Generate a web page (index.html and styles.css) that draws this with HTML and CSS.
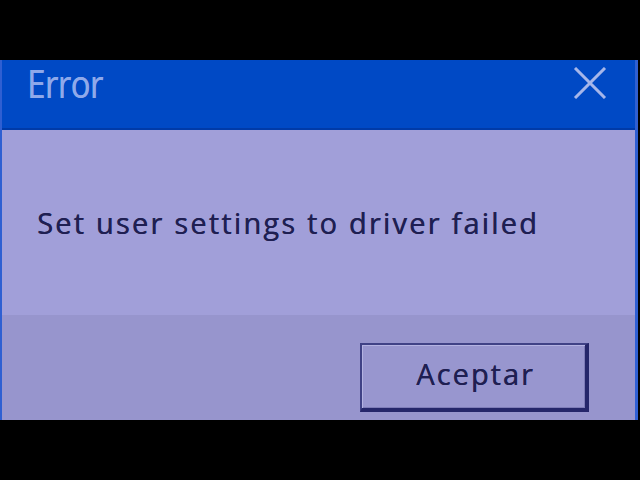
FILE: index.html
```html
<!DOCTYPE html>
<html>
<head>
<meta charset="utf-8">
<link rel="stylesheet" href="styles.css">
</head>
<body>
<div class="screen">
  <div class="dialog">
    <div class="titlebar">
      <span class="title">Error</span>
      <svg class="close" width="34" height="32" viewBox="0 0 34 32">
        <path d="M2 1 L32 31 M32 1 L2 31" stroke="#a6b6ea" stroke-width="3" fill="none"/>
      </svg>
    </div>
    <div class="content">
      <p class="message">Set user settings to driver failed</p>
    </div>
    <div class="footer">
      <button class="btn">Aceptar</button>
    </div>
  </div>
</div>
</body>
</html>
```
FILE: styles.css
```css
html, body {
  margin: 0;
  padding: 0;
  background: #000;
}
.screen {
  width: 640px;
  height: 480px;
  padding: 60px 0 60px 0;
  box-sizing: border-box;
  display: flex;
}
.dialog {
  flex: 1;
  display: flex;
  flex-direction: column;
  border-left: 2px solid #2f5fd2;
  border-right: 3px solid #2f5fd2;
  margin-right: 2px;
  font-family: "Open Sans", "Noto Sans", sans-serif;
}
.titlebar {
  height: 70px;
  box-sizing: border-box;
  background: #0049c5;
  border-bottom: 2px solid #003aa8;
  display: flex;
  align-items: flex-start;
  justify-content: space-between;
  padding: 0 28px 0 25px;
}
.title {
  display: inline-block;
  color: #8fa9ea;
  font-size: 38px;
  line-height: 38px;
  margin-top: 4px;
  letter-spacing: -0.5px;
  transform: scaleX(0.86);
  transform-origin: left center;
  text-shadow: 0.5px 0 0 #8fa9ea;
}
.close {
  display: block;
  margin-top: 7px;
}
.content {
  height: 185px;
  background: #a19fd9;
  padding-left: 35px;
  box-sizing: border-box;
}
.message {
  margin: 0;
  padding-top: 74px;
  font-size: 29px;
  line-height: 38px;
  color: #1f1f52;
  letter-spacing: 2.2px;
  text-shadow: 0.4px 0 0 #1f1f52;
}
.footer {
  flex: 1;
  background: #9795cd;
  display: flex;
  justify-content: flex-end;
  align-items: flex-start;
  padding: 28px 46px 0 0;
}
.btn {
  width: 229px;
  height: 69px;
  box-sizing: border-box;
  background: #9896cf;
  border-style: solid;
  border-width: 2px 4px 4px 2px;
  border-color: #404286 #25266a #25266a #404286;
  box-shadow: inset 1px 1px 0 #b4b3e2, inset -1px -1px 0 #7e7cb8;
  font-family: "Open Sans", "Noto Sans", sans-serif;
  font-size: 29px;
  letter-spacing: 2px;
  color: #1f1f52;
  text-shadow: 0.4px 0 0 #1f1f52;
  padding: 0 0 6px 4px;
}
```
